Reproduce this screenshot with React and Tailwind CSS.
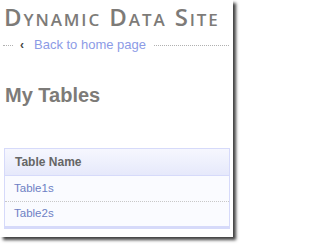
const rows = ['Table1s', 'Table2s']

export default function App() {
  return (
    <div className="w-[241px] h-[244px] bg-white overflow-hidden">
      <div className="w-[233px] h-[237px] bg-white shadow-[3px_3px_3px_rgba(0,0,0,0.75)] font-['Liberation_Sans',sans-serif]">
        <h1 className="pl-[4px] pt-[3px] font-['Open_Sans',sans-serif] font-semibold text-[24px] leading-[27px] text-[#7d7b78] [font-variant:small-caps] tracking-[1.9px] whitespace-nowrap">
          Dynamic Data Site
        </h1>
        <div className="flex items-center mt-[8px] h-[14px]">
          <div className="w-[10px] ml-[3px] border-t border-dotted border-[#b0b0b0]" />
          <span className="ml-[7px] text-[12px] font-bold text-[#444]">‹</span>
          <a className="ml-[10px] text-[13px] text-[#8c9be6]">Back to home page</a>
          <div className="flex-1 ml-[8px] mr-[4px] border-t border-dotted border-[#b0b0b0]" />
        </div>

        <h2 className="pl-[5px] mt-[31px] text-[20px] leading-[24px] font-bold text-[#7d7b78]">My Tables</h2>

        <table className="mt-[41px] ml-[4px] w-[226px] border border-[#d6dafa] border-b-[3px] text-[12px] border-collapse">
          <thead>
            <tr className="h-[27px] bg-gradient-to-b from-[#f6f7fe] to-[#e6e9fb] border-b border-[#d6dafa]">
              <th className="text-left pl-[10px] font-bold text-[#666]">Table Name</th>
            </tr>
          </thead>
          <tbody className="bg-[#fafbff]">
            {rows.map((r, i) => (
              <tr key={r} className={i === 0 ? 'h-[26px] border-b border-dotted border-[#c8c8c8]' : 'h-[26px]'}>
                <td className="pl-[9px] text-[11.5px] text-[#6d80c4]">{r}</td>
              </tr>
            ))}
          </tbody>
        </table>
      </div>
    </div>
  )
}
